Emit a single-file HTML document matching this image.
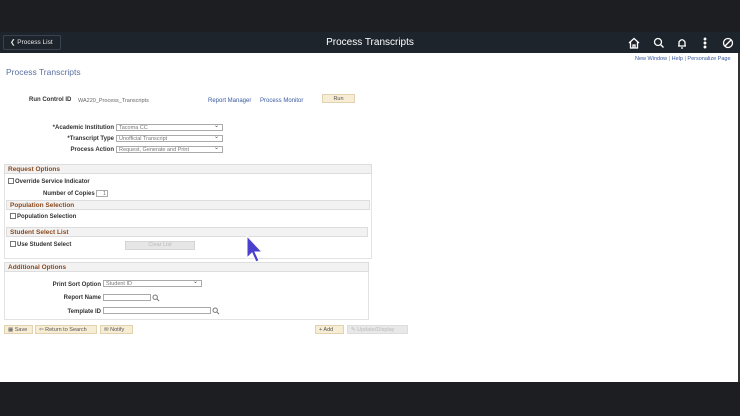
<!DOCTYPE html>
<html><head><style>
*{margin:0;padding:0;box-sizing:border-box}
body{width:740px;height:416px;background:#1c1e21;position:relative;overflow:hidden;font-family:"Liberation Sans",sans-serif}
.a{position:absolute}
#hdr{left:0;top:32px;width:740px;height:21px;background:#1e242c}
#pg{left:0;top:53px;width:738px;height:329px;background:#fff}
.t{font-size:6px;color:#333;white-space:nowrap}
.lb{font-size:6px;color:#333;font-weight:bold;white-space:nowrap;text-align:right}
.lk{font-size:6px;color:#3a5aa0;white-space:nowrap}
.in{background:#fff;border:1px solid #aaa;height:7px;font-size:5.5px;color:#777;padding-left:2px;line-height:6px}
.sel:after{content:"⌄";position:absolute;right:3px;top:-2px;font-size:6px;color:#444}
.sec{background:#f2f2f2;border:1px solid #ddd;height:10px;font-size:6.5px;color:#8a4a1e;font-weight:bold;padding-left:3px;line-height:10px}
.box{border:1px solid #e3e3e3}
.cb{width:6px;height:6px;border:1px solid #777;background:#fff}
.btn{height:9px;background:#f7ecd4;border:1px solid #e2d3b0;font-size:5.5px;color:#555;line-height:8px;padding-left:3px}
</style></head><body>
<div class="a" id="hdr"></div>
<div class="a" style="left:3px;top:35px;width:58px;height:15px;border:1px solid #3a4250;border-radius:2px;color:#e8e8e8;font-size:6.5px;line-height:13px;padding-left:6px">&#10094; Process List</div>
<div class="a" style="left:0;width:740px;top:37px;text-align:center;color:#fff;font-size:10px">Process Transcripts</div>
<svg class="a" style="left:626px;top:36px" width="110" height="14" viewBox="0 0 110 14" fill="none" stroke="#fff" stroke-width="1.3">
<path d="M3 7 L8 2.5 L13 7 M4.5 6 V12 H11.5 V6 M7 12 V9 H9 V12"/>
<circle cx="32" cy="6" r="3.5"/><path d="M34.5 8.5 L37.5 11.5"/>
<path d="M52 10 H60 M53 10 V6 Q56 1.5 59 6 V10 M55 12 H57"/>
<circle cx="79" cy="3" r=".8" fill="#fff"/><circle cx="79" cy="7" r=".8" fill="#fff"/><circle cx="79" cy="11" r=".8" fill="#fff"/>
<circle cx="102" cy="7" r="4.5"/><path d="M99 10 L105 4"/>
</svg>
<div class="a" id="pg"></div>
<div class="a" style="left:738px;top:53px;width:2px;height:329px;background:#333"></div>
<div class="a lk" style="left:635px;top:56px;font-size:5.5px">New Window <span style="color:#888">|</span> Help <span style="color:#888">|</span> Personalize Page</div>
<div class="a" style="left:6px;top:67px;font-size:8.5px;color:#5a6fa0">Process Transcripts</div>
<div class="a lb" style="left:29px;top:97px">Run Control ID</div>
<div class="a t" style="left:78px;top:98px;color:#666;font-size:5.5px">WA220_Process_Transcripts</div>
<div class="a lk" style="left:208px;top:98px">Report Manager</div>
<div class="a lk" style="left:260px;top:98px">Process Monitor</div>
<div class="a btn" style="left:322px;top:94px;width:33px;text-align:center;padding:0">Run</div>
<div class="a lb" style="left:30px;top:125px;width:84px">*Academic Institution</div>
<div class="a in sel" style="left:116px;top:124px;width:107px">Tacoma CC</div>
<div class="a lb" style="left:30px;top:136px;width:84px">*Transcript Type</div>
<div class="a in sel" style="left:116px;top:135px;width:107px">Unofficial Transcript</div>
<div class="a lb" style="left:30px;top:147px;width:84px">Process Action</div>
<div class="a in sel" style="left:116px;top:146px;width:107px">Request, Generate and Print</div>
<div class="a box" style="left:4px;top:164px;width:368px;height:95px"></div>
<div class="a sec" style="left:4px;top:164px;width:368px">Request Options</div>
<div class="a cb" style="left:8px;top:178px"></div>
<div class="a lb" style="left:15px;top:179px">Override Service Indicator</div>
<div class="a lb" style="left:43px;top:191px">Number of Copies</div>
<div class="a in" style="left:96px;top:190px;width:12px;text-align:right;padding-right:1px">1</div>
<div class="a sec" style="left:6px;top:200px;width:364px">Population Selection</div>
<div class="a cb" style="left:10px;top:213px"></div>
<div class="a lb" style="left:17px;top:214px">Population Selection</div>
<div class="a sec" style="left:6px;top:227px;width:362px">Student Select List</div>
<div class="a cb" style="left:10px;top:241px"></div>
<div class="a lb" style="left:17px;top:242px">Use Student Select</div>
<div class="a" style="left:125px;top:241px;width:70px;height:9px;background:#e6e6e6;border:1px solid #d5d5d5;font-size:5.5px;color:#bbb;text-align:center;line-height:7px">Clear List</div>
<div class="a box" style="left:4px;top:262px;width:365px;height:58px"></div>
<div class="a sec" style="left:4px;top:262px;width:365px">Additional Options</div>
<div class="a lb" style="left:30px;top:282px;width:71px">Print Sort Option</div>
<div class="a in sel" style="left:103px;top:280px;width:99px">Student ID</div>
<div class="a lb" style="left:30px;top:295px;width:71px">Report Name</div>
<div class="a in" style="left:103px;top:294px;width:48px"></div>
<div class="a lb" style="left:30px;top:309px;width:71px">Template ID</div>
<div class="a in" style="left:103px;top:307px;width:108px"></div>
<svg class="a" style="left:152px;top:294px" width="8" height="8" fill="none" stroke="#777" stroke-width="1"><circle cx="3.2" cy="3.2" r="2.2"/><path d="M4.8 4.8 L7 7"/></svg>
<svg class="a" style="left:212px;top:307px" width="8" height="8" fill="none" stroke="#777" stroke-width="1"><circle cx="3.2" cy="3.2" r="2.2"/><path d="M4.8 4.8 L7 7"/></svg>
<div class="a btn" style="left:4px;top:325px;width:29px">▦ Save</div>
<div class="a btn" style="left:35px;top:325px;width:62px">⇦ Return to Search</div>
<div class="a btn" style="left:100px;top:325px;width:33px">✉ Notify</div>
<div class="a btn" style="left:315px;top:325px;width:29px">+ Add</div>
<div class="a btn" style="left:347px;top:325px;width:61px;background:#e8e8e8;border-color:#ddd;color:#bbb">✎ Update/Display</div>
<svg class="a" style="left:244px;top:234px" width="22" height="30" viewBox="0 0 22 30"><path d="M3 2 L3 24 L8 19 L12 28 L15 26.5 L11 18 L18 18 Z" fill="#4b3fd0" stroke="#fff" stroke-width="1"/></svg>
</body></html>
